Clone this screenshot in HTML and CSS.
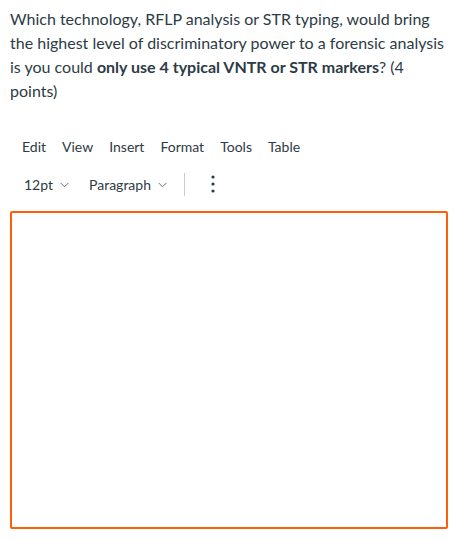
FILE: index.html
```html
<!DOCTYPE html>
<html>
<head>
<meta charset="utf-8">
<link rel="stylesheet" href="styles.css">
</head>
<body>
<div class="page">
  <p class="question">Which technology, RFLP analysis or STR typing, would bring the highest level of discriminatory power to a forensic analysis is you could <strong>only use 4 typical VNTR or STR markers</strong>? (4 points)</p>
  <div class="editor">
    <div class="menubar">
      <span class="menu-item">Edit</span>
      <span class="menu-item">View</span>
      <span class="menu-item">Insert</span>
      <span class="menu-item">Format</span>
      <span class="menu-item">Tools</span>
      <span class="menu-item">Table</span>
    </div>
    <div class="toolbar">
      <span class="select size">12pt <svg class="chev" width="9" height="6" viewBox="0 0 9 6"><path d="M0.5 0.8 L4.5 4.8 L8.5 0.8" fill="none" stroke="#6b7780" stroke-width="1"/></svg></span>
      <span class="select para">Paragraph <svg class="chev" width="9" height="6" viewBox="0 0 9 6"><path d="M0.5 0.8 L4.5 4.8 L8.5 0.8" fill="none" stroke="#6b7780" stroke-width="1"/></svg></span>
      <span class="sep"></span>
      <span class="more"><svg width="4" height="18" viewBox="0 0 4 18"><circle cx="2" cy="2" r="1.6" fill="#2d3b45"/><circle cx="2" cy="9" r="1.6" fill="#2d3b45"/><circle cx="2" cy="16" r="1.6" fill="#2d3b45"/></svg></span>
    </div>
    <div class="area"></div>
  </div>
</div>
</body>
</html>
```

FILE: styles.css
```css
html, body {
  margin: 0;
  padding: 0;
  background: #ffffff;
}
.page {
  padding: 7px 10px 0 10px;
  font-family: Lato, "Noto Sans", sans-serif;
  color: #2d3b45;
}
.question {
  margin: 0;
  font-size: 16px;
  line-height: 24px;
}
.question strong {
  font-weight: 700;
}
.editor {
  margin-top: 30px;
}
.menubar {
  display: flex;
  height: 28px;
  align-items: center;
  padding-left: 4px;
  font-size: 14px;
}
.menu-item {
  padding: 0 8px;
  line-height: 28px;
}
.toolbar {
  display: flex;
  align-items: center;
  height: 46px;
  padding-left: 14px;
  font-size: 14px;
}
.select {
  display: flex;
  align-items: center;
  gap: 7px;
}
.chev {
  margin-top: 1px;
}
.size {
  margin-right: 20px;
}
.sep {
  width: 1px;
  height: 23px;
  background: #c7cdd1;
  margin-left: 17px;
}
.more {
  display: flex;
  margin-left: 26px;
}
.area {
  margin-top: 4px;
  height: 314px;
  border: 2px solid #ff5f0a;
  border-radius: 2px;
}
```
